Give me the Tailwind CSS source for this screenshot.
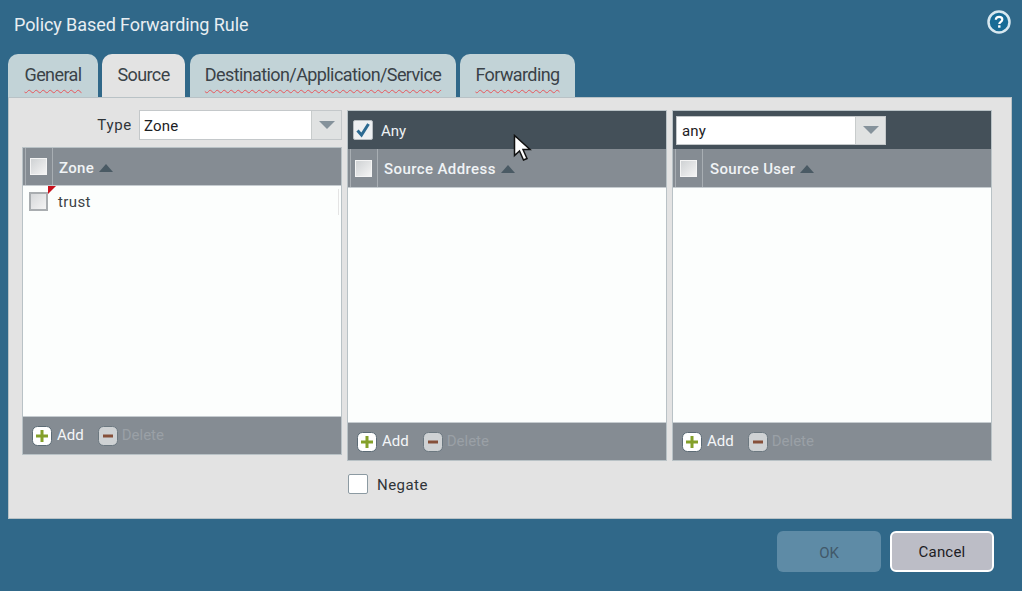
<!DOCTYPE html>
<html lang="en">
<head>
  <meta charset="UTF-8">
  <title>Policy Based Forwarding Rule</title>
  <script src="https://cdn.jsdelivr.net/npm/@tailwindcss/browser@4"></script>
</head>
<body class="bg-[#306889] w-[1022px] h-[591px] overflow-hidden font-['Roboto',sans-serif] text-[#3a4248] relative">
  <!-- title bar -->
  <div class="h-[54px] pl-[14px] pr-[11px] flex items-start justify-between">
    <h1 class="mt-[13px] text-[18px] leading-[24px] tracking-[-0.08px] text-[#e8eef2]">Policy Based Forwarding Rule</h1>
    <svg class="mt-[10px]" width="24" height="24" viewBox="0 0 24 24">
      <circle cx="12" cy="12" r="10.5" fill="#176b96" stroke="#d8e8f0" stroke-width="2.500"/>
      <path d="M8.800 9.800c.1-1.900 1.500-2.900 3.300-2.900s3.200 1 3.200 2.600c0 2.300-3 2.300-3 4.500" fill="none" stroke="#fff" stroke-width="2.200"/>
      <rect x="11.100" y="15.300" width="2.400" height="2.400" fill="#fff"/>
    </svg>
  </div>

  <!-- tabs -->
  <div class="h-[43px] pl-[8px] flex gap-[4px] text-[18px] tracking-[-0.6px]">
    <div class="w-[90px] rounded-t-[10px] bg-[#c2d3d7] flex justify-center pt-[9px] leading-[24px] underline decoration-wavy decoration-[#e8565c] decoration-1 underline-offset-[8px]">General</div>
    <div class="w-[83px] rounded-t-[10px] bg-[#e3e3e3] flex justify-center pt-[9px] leading-[24px]">Source</div>
    <div class="w-[266px] ml-[1px] rounded-t-[10px] bg-[#c2d3d7] flex justify-center pt-[9px] leading-[24px] underline decoration-wavy decoration-[#e8565c] decoration-1 underline-offset-[8px]">Destination/Application/Service</div>
    <div class="w-[115px] rounded-t-[10px] bg-[#c2d3d7] flex justify-center pt-[9px] leading-[24px] underline decoration-wavy decoration-[#e8565c] decoration-1 underline-offset-[8px]">Forwarding</div>
  </div>

  <!-- panel -->
  <div class="ml-[8px] w-[1004px] h-[422px] bg-[#e3e3e3] border border-[#b9c2c6] pt-[12px] pl-[13px] flex gap-[5px] text-[15px]">
    <!-- zone column -->
    <div class="w-[320px]">
      <div class="h-[30px] flex items-center justify-end">
        <span class="mr-[7px] tracking-[0.7px] text-[#2f3438]">Type</span>
        <div class="w-[203px] h-[30px] flex bg-white border border-[#c4c8ca]">
          <span class="flex-1 pl-[4px] leading-[30px] tracking-[0.2px] text-[#1c2024]">Zone</span>
          <div class="w-[30px] bg-[#e0e2e2] border-l border-[#c8cccc] flex items-center justify-center">
            <svg width="16" height="8" viewBox="0 0 16 8"><path d="M0 0h16l-8 8z" fill="#85929b"/></svg>
          </div>
        </div>
      </div>
      <div class="mt-[7px] h-[308px] border border-[#b9c2c6] flex flex-col">
        <div class="h-[38px] bg-[#858c93] border-b border-[#c6ccd0] flex items-stretch">
          <div class="w-[28px] ml-[2px] border-x border-[#a8aeb3] flex items-center justify-center">
            <span class="w-[17px] h-[17px] mr-[2px] bg-linear-to-br from-[#cfd2d4] to-[#f4f4f4] border border-[#f4f4f4]"></span>
          </div>
          <span class="ml-[6px] pt-[1px] leading-[38px] font-medium tracking-[0.3px] text-[#f0f3f5]">Zone</span>
          <svg class="ml-[5px] mt-[16px]" width="14" height="8" viewBox="0 0 14 8"><path d="M7 0l7 8H0z" fill="#4a5a64"/></svg>
        </div>
        <div class="flex-1 bg-[#fcfefd] relative">
          <div class="h-[30px] pt-[1px] flex items-center">
            <span class="ml-[6px] w-[19px] h-[19px] bg-linear-to-br from-[#d6d8da] to-[#f4f4f4] border-2 border-[#a9adb0]"></span>
            <span class="ml-[10px] pt-[2px] tracking-[0.4px] text-[#3c4246]">trust</span>
            <div class="ml-auto mr-[2px] h-[26px] border-r border-[#e4e4e4]"></div>
          </div>
          <svg class="absolute left-[25px] top-0" width="8" height="8" viewBox="0 0 8 8"><path d="M0 0h8L0 8z" fill="#c8101c"/></svg>
        </div>
        <div class="h-[38px] bg-[#858c93] border-t border-[#c6ccd0] flex items-center pl-[9px]">
          <svg width="20" height="20" viewBox="0 0 20 20"><rect x="0.500" y="0.500" width="19" height="19" rx="5" fill="#fff" stroke="#5c6b75"/><path d="M8.500 4h3v4.500H16v3h-4.500V16h-3v-4.500H4v-3h4.500z" fill="#84a02a"/></svg>
          <span class="ml-[5px] text-[#f4f6f8]">Add</span>
          <svg class="ml-[14px]" width="20" height="20" viewBox="0 0 20 20"><rect x="0.500" y="0.500" width="19" height="19" rx="5" fill="#cfd2d4" stroke="#6c7880"/><rect x="5" y="8.500" width="10" height="3" fill="#86503a"/></svg>
          <span class="ml-[4px] text-[#9aa0a6]">Delete</span>
        </div>
      </div>
    </div>

    <!-- source address column -->
    <div class="w-[320px]">
      <div class="h-[351px] border border-[#b9c2c6] flex flex-col">
        <div class="h-[38px] bg-[#445059] flex items-center pl-[5px]">
          <span class="w-[20px] h-[20px] rounded-[2px] bg-[#eef0f2] border border-[#b8bec2] flex items-center justify-center">
            <svg width="16" height="16" viewBox="0 0 16 16"><path d="M2.500 8.500l4 4.500 7-11" fill="none" stroke="#2c6a92" stroke-width="3"/></svg>
          </span>
          <span class="ml-[8px] pt-[2px] text-[#eef2f4]">Any</span>
        </div>
        <div class="h-[39px] bg-[#858c93] border-b border-[#c6ccd0] flex items-stretch">
          <div class="w-[28px] ml-[2px] border-x border-[#a8aeb3] flex items-center justify-center">
            <span class="w-[17px] h-[17px] mr-[2px] bg-linear-to-br from-[#cfd2d4] to-[#f4f4f4] border border-[#f4f4f4]"></span>
          </div>
          <span class="ml-[6px] pt-[1px] leading-[39px] font-medium tracking-[0.4px] text-[#f0f3f5]">Source Address</span>
          <svg class="ml-[5px] mt-[16px]" width="14" height="8" viewBox="0 0 14 8"><path d="M7 0l7 8H0z" fill="#4a5a64"/></svg>
        </div>
        <div class="flex-1 bg-[#fcfefd]"></div>
        <div class="h-[38px] bg-[#858c93] border-t border-[#c6ccd0] flex items-center pl-[9px]">
          <svg width="20" height="20" viewBox="0 0 20 20"><rect x="0.500" y="0.500" width="19" height="19" rx="5" fill="#fff" stroke="#5c6b75"/><path d="M8.500 4h3v4.500H16v3h-4.500V16h-3v-4.500H4v-3h4.500z" fill="#84a02a"/></svg>
          <span class="ml-[5px] text-[#f4f6f8]">Add</span>
          <svg class="ml-[14px]" width="20" height="20" viewBox="0 0 20 20"><rect x="0.500" y="0.500" width="19" height="19" rx="5" fill="#cfd2d4" stroke="#6c7880"/><rect x="5" y="8.500" width="10" height="3" fill="#86503a"/></svg>
          <span class="ml-[4px] text-[#9aa0a6]">Delete</span>
        </div>
      </div>
      <div class="mt-[11px] flex items-center">
        <span class="w-[20px] h-[20px] ml-[1px] rounded-[2px] bg-white border border-[#8c9aa2]"></span>
        <span class="ml-[9px] pt-[2px] tracking-[0.45px] text-[#2f3438]">Negate</span>
      </div>
    </div>

    <!-- source user column -->
    <div class="w-[320px]">
      <div class="h-[351px] border border-[#b9c2c6] flex flex-col">
        <div class="h-[38px] bg-[#445059] flex items-center pl-[3px]">
          <div class="w-[210px] h-[29px] flex bg-white border border-[#c4c8ca]">
            <span class="flex-1 pl-[5px] pt-[1px] leading-[27px] tracking-[0.2px] text-[#1c2024]">any</span>
            <div class="w-[30px] bg-[#e0e2e2] border-l border-[#c8cccc] flex items-center justify-center">
              <svg width="16" height="8" viewBox="0 0 16 8"><path d="M0 0h16l-8 8z" fill="#85929b"/></svg>
            </div>
          </div>
        </div>
        <div class="h-[39px] bg-[#858c93] border-b border-[#c6ccd0] flex items-stretch">
          <div class="w-[28px] ml-[2px] border-x border-[#a8aeb3] flex items-center justify-center">
            <span class="w-[17px] h-[17px] mr-[2px] bg-linear-to-br from-[#cfd2d4] to-[#f4f4f4] border border-[#f4f4f4]"></span>
          </div>
          <span class="ml-[7px] pt-[1px] leading-[39px] font-medium tracking-[0.35px] text-[#f0f3f5]">Source User</span>
          <svg class="ml-[5px] mt-[16px]" width="14" height="8" viewBox="0 0 14 8"><path d="M7 0l7 8H0z" fill="#4a5a64"/></svg>
        </div>
        <div class="flex-1 bg-[#fcfefd]"></div>
        <div class="h-[38px] bg-[#858c93] border-t border-[#c6ccd0] flex items-center pl-[9px]">
          <svg width="20" height="20" viewBox="0 0 20 20"><rect x="0.500" y="0.500" width="19" height="19" rx="5" fill="#fff" stroke="#5c6b75"/><path d="M8.500 4h3v4.500H16v3h-4.500V16h-3v-4.500H4v-3h4.500z" fill="#84a02a"/></svg>
          <span class="ml-[5px] text-[#f4f6f8]">Add</span>
          <svg class="ml-[14px]" width="20" height="20" viewBox="0 0 20 20"><rect x="0.500" y="0.500" width="19" height="19" rx="5" fill="#cfd2d4" stroke="#6c7880"/><rect x="5" y="8.500" width="10" height="3" fill="#86503a"/></svg>
          <span class="ml-[4px] text-[#9aa0a6]">Delete</span>
        </div>
      </div>
    </div>
  </div>

  <!-- footer buttons -->
  <div class="mt-[12px] pr-[28px] flex justify-end gap-[9px] text-[15px]">
    <button class="w-[104px] h-[41px] pt-[3px] rounded-[6px] bg-[#5e8ba6] text-[#42596a]">OK</button>
    <button class="w-[104px] h-[41px] pt-[2px] rounded-[6px] bg-[#bcbdc6] border-[2px] border-white tracking-[0.2px] text-[#1c2024]">Cancel</button>
  </div>

  <!-- mouse pointer over the Any bar -->
  <svg class="absolute left-[513px] top-[134px]" width="19" height="29" viewBox="0 0 19 29">
    <path d="M1.500 1.500v20l5-4.500 4 9 3.500-1.500-4-9h7z" fill="#fff" stroke="#111" stroke-width="1.500"/>
  </svg>
</body>
</html>
